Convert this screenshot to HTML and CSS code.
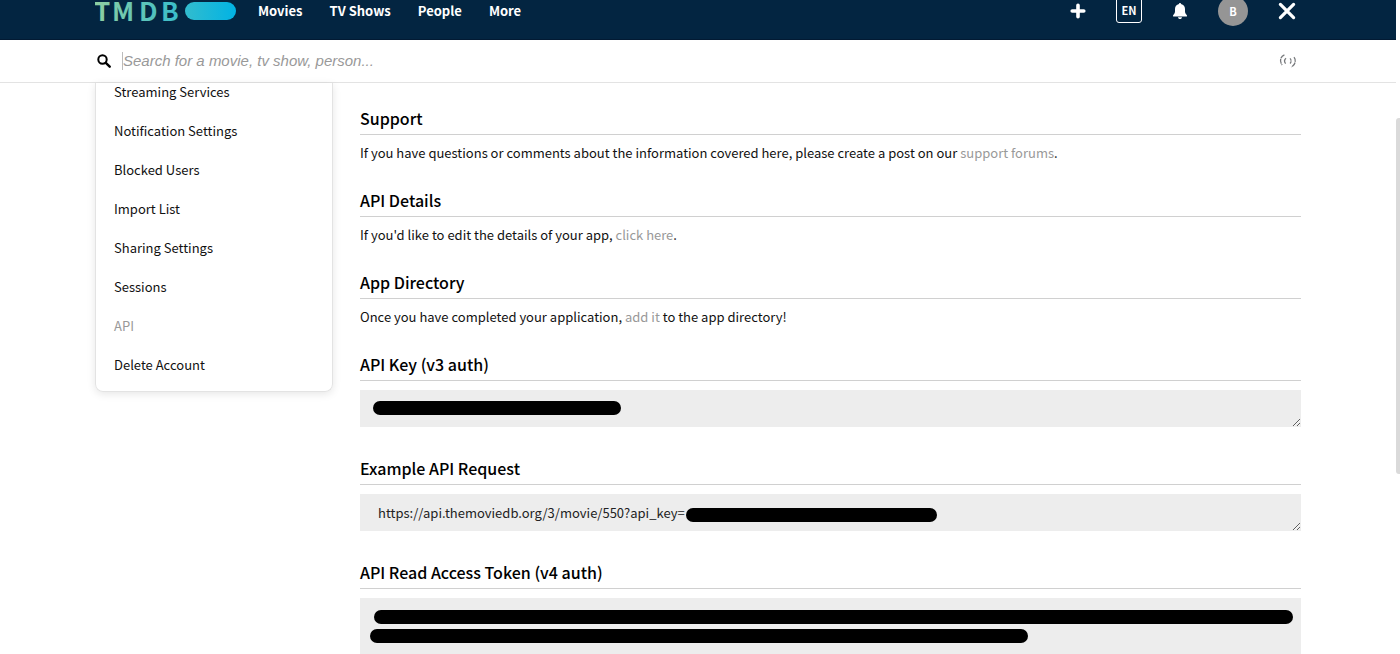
FILE: index.html
```html
<!DOCTYPE html>
<html lang="en">
<head>
<meta charset="utf-8">
<title>API Settings</title>
<link rel="stylesheet" href="styles.css">
</head>
<body>
<div class="viewport">
  <header class="topbar">
    <a class="logo" href="#" aria-label="TMDB">
      <svg width="142" height="24" viewBox="0 0 142 24">
        <defs>
          <linearGradient id="brand" gradientUnits="userSpaceOnUse" x1="0" y1="0" x2="142" y2="0">
            <stop offset="0" stop-color="#90cea1"/>
            <stop offset=".56" stop-color="#3cbec9"/>
            <stop offset="1" stop-color="#00b3e5"/>
          </linearGradient>
        </defs>
        <text class="logo-text" x="-1 17 44 66" y="21" fill="url(#brand)">TMDB</text>
        <rect x="90" y="2" width="51" height="18" rx="9" fill="url(#brand)"/>
      </svg>
    </a>
    <nav class="nav">
      <a href="#">Movies</a>
      <a href="#">TV Shows</a>
      <a href="#">People</a>
      <a href="#">More</a>
    </nav>
    <div class="actions">
      <button class="icon-button" aria-label="Add"><svg width="16" height="16" viewBox="0 0 16 16"><path d="M8 2.200V13.800M2.200 8H13.800" stroke="#fff" stroke-width="3.600" stroke-linecap="round"/></svg></button>
      <button class="language">EN</button>
      <button class="icon-button" aria-label="Notifications"><svg width="16" height="18" viewBox="0 0 16 18"><path d="M8 1C8.600 1 9 1.400 9 2C11.600 2.500 13 4.500 13 7V9.400C13 11 13.900 12 14.900 13.100V14.400H1.100V13.100C2.100 12 3 11 3 9.400V7C3 4.500 4.400 2.500 7 2C7 1.400 7.400 1 8 1ZM6 15.200H10C10 16.300 9.100 17 8 17S6 16.300 6 15.200Z" fill="#fff"/></svg></button>
      <button class="avatar">B</button>
      <button class="icon-button" aria-label="Close search"><svg width="18" height="18" viewBox="0 0 18 18"><path d="M2.400 2.400L15.600 15.600M15.600 2.400L2.400 15.600" stroke="#fff" stroke-width="3.200" stroke-linecap="round"/></svg></button>
    </div>
  </header>

  <form class="search">
    <svg class="search-icon" width="14" height="14" viewBox="0 0 14 14"><circle cx="5.500" cy="5.500" r="4.200" fill="none" stroke="#000" stroke-width="2"/><path d="M8.800 8.800L12.700 12.700" stroke="#000" stroke-width="2.400" stroke-linecap="round"/></svg>
    <input class="search-input" type="text" aria-label="Search" placeholder="Search for a movie, tv show, person...">
    <svg class="spinner" width="18" height="14" viewBox="0 0 18 14" fill="none" stroke="#77797c" stroke-width="1.300"><path d="M5.400 .8C1 2.500 .4 8 3.200 11" stroke-dasharray="5 .6"/><path d="M7 4.200C5.200 5.800 5.300 8 6.600 9.600"/><path d="M11 4.400C12.400 5.800 12.400 8 11 9.600" stroke-dasharray="2.500 .5"/><path d="M15 3.200C17.400 6 16.400 11 12.400 13" stroke-dasharray="5 .6"/></svg>
  </form>

  <div class="content">
    <aside class="sidebar">
      <a href="#">Streaming Services</a>
      <a href="#">Notification Settings</a>
      <a href="#">Blocked Users</a>
      <a href="#">Import List</a>
      <a href="#">Sharing Settings</a>
      <a href="#">Sessions</a>
      <a href="#" class="current">API</a>
      <a href="#">Delete Account</a>
    </aside>
    <main class="main">
      <section class="section">
        <h2>Support</h2>
        <p>If you have questions or comments about the information covered here, please create a post on our <a href="#">support forums</a>.</p>
      </section>
      <section class="section">
        <h2>API Details</h2>
        <p>If you'd like to edit the details of your app, <a href="#">click here</a>.</p>
      </section>
      <section class="section">
        <h2>App Directory</h2>
        <p>Once you have completed your application, <a href="#">add it</a> to the app directory!</p>
      </section>
      <section class="section">
        <h2><label for="key">API Key (v3 auth)</label></h2>
        <div class="field">
          <textarea id="key" readonly></textarea>
          <span class="mask mask-key"></span>
        </div>
      </section>
      <section class="section">
        <h2><label for="example">Example API Request</label></h2>
        <div class="field">
          <textarea id="example" readonly>https://api.themoviedb.org/3/movie/550?api_key=</textarea>
          <span class="mask mask-example"></span>
        </div>
      </section>
      <section class="section">
        <h2><label for="token">API Read Access Token (v4 auth)</label></h2>
        <div class="field">
          <textarea id="token" class="tall" readonly></textarea>
          <span class="mask mask-token-first"></span>
          <span class="mask mask-token-second"></span>
        </div>
      </section>
    </main>
  </div>
  <div class="scroll-thumb"></div>
</div>
</body>
</html>
```
FILE: styles.css
```css
* { box-sizing: border-box; }

body {
  margin: 0;
  color: #111;
  background: #fff;
  font: 13px/18px "Noto Sans CJK SC", "Noto Sans", sans-serif;
}

a { color: inherit; text-decoration: none; }
button { margin: 0; padding: 0; border: 0; background: none; color: #fff; font: inherit; }

.viewport {
  position: relative;
  height: 100vh;
  padding-right: 4px;
  overflow: hidden;
}

/* Header */
.topbar {
  display: flex;
  align-items: flex-start;
  height: 40px;
  padding: 0 100px 0 95px;
  background: #032541;
  border-bottom: 1px solid #021a33;
  color: #fff;
}
.logo { display: block; height: 24px; }
.logo svg { display: block; }
.logo-text { font-size: 26px; font-weight: 700; }
.nav {
  display: flex;
  gap: 27px;
  margin-left: 21px;
  font-weight: 700;
  line-height: 22px;
}
.actions {
  display: flex;
  align-items: center;
  gap: 30px;
  height: 22px;
  margin-left: auto;
}
.icon-button { display: flex; }
.language {
  width: 26px;
  height: 26px;
  margin-bottom: 2px;
  border: 1px solid #fff;
  border-radius: 3px;
  font-size: 11px;
  font-weight: 700;
}
.avatar {
  width: 30px;
  height: 30px;
  border-radius: 50%;
  background: #959595;
  font-size: 11px;
  font-weight: 700;
}

/* Search */
.search {
  display: flex;
  align-items: center;
  height: 43px;
  padding: 0 99px 0 97px;
  border-bottom: 1px solid #e3e3e3;
}
.search-input {
  flex: 1;
  height: 18px;
  margin-left: 11px;
  padding: 0;
  border: 0;
  border-left: 1px solid #bbb;
  outline: 0;
  background: none;
  font: italic 15px/18px "Liberation Sans", Arial, sans-serif;
}
.search-input::placeholder { color: #999; opacity: 1; }

/* Page */
.content {
  display: flex;
  align-items: flex-start;
  gap: 27px;
  padding: 0 95px;
}
.sidebar {
  display: flex;
  flex-direction: column;
  gap: 21px;
  width: 238px;
  padding: 0 18px 17px;
  border: 1px solid #e3e3e3;
  border-top: 0;
  border-radius: 0 0 8px 8px;
  box-shadow: 0 2px 8px rgba(0, 0, 0, 0.1);
}
.current { color: #999; }
.main { flex: 1; min-width: 0; padding-top: 23px; }
.section h2 {
  margin: 0 0 9px;
  padding-bottom: 4px;
  border-bottom: 1px solid #d0d0d0;
  color: #000;
  font-size: 16px;
  font-weight: 500;
  line-height: 24px;
}
.section p { margin: 0 0 26px; }
.section p a { color: #999; }

.field { position: relative; margin-bottom: 29px; }
.field textarea {
  display: block;
  width: 100%;
  height: 37px;
  padding: 10px 18px 8px;
  border: 0;
  outline: 0;
  background: #ededed;
  color: #222;
  font: inherit;
  overflow: hidden;
  resize: vertical;
}
.field .tall { height: 80px; }

/* Bars that hide the secret values */
.mask { position: absolute; height: 14px; border-radius: 7px; background: #000; }
.mask-key { top: 11px; left: 13px; width: 248px; }
.mask-example { top: 14px; left: 326px; width: 251px; }
.mask-token-first { top: 12px; left: 14px; right: 8px; }
.mask-token-second { top: 31px; left: 10px; width: 658px; }

.scroll-thumb {
  position: absolute;
  top: 118px;
  right: 0;
  width: 4px;
  height: 356px;
  border-radius: 3px 0 0 3px;
  background: #dadada;
}
```
